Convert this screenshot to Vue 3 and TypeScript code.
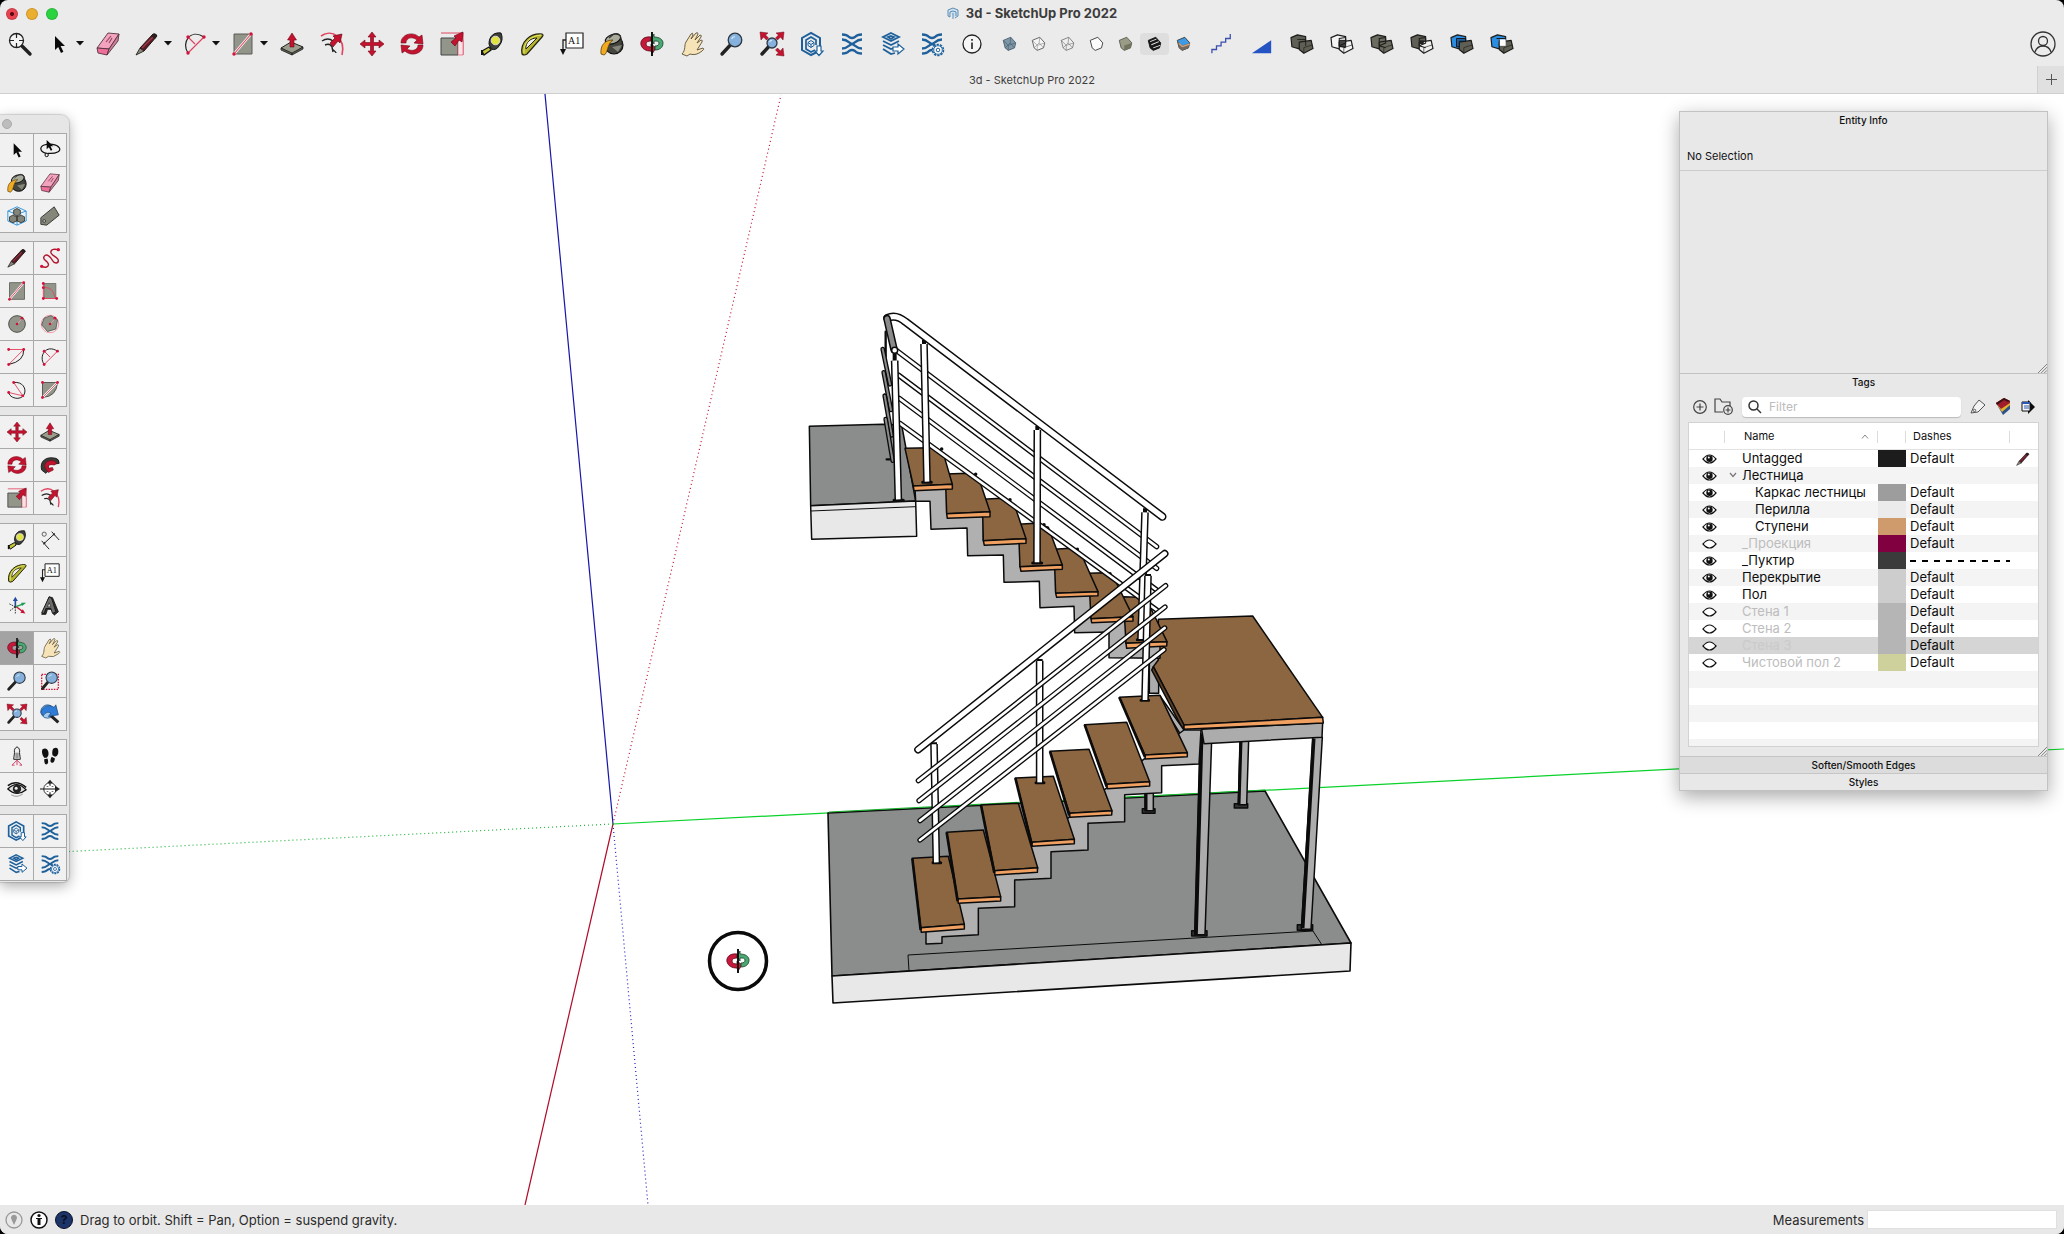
<script setup lang="ts">
import { ref } from 'vue'

interface Tool { icon: string; label: string; menu?: boolean }
interface Tag {
  name: string
  color?: string
  indent?: boolean
  folder?: boolean
  hidden?: boolean
  dashed?: boolean
  current?: boolean
  selected?: boolean
}

const dot = (x: number, y: number, r = 1.7) => `<circle cx="${x}" cy="${y}" r="${r}" fill="#d3123a"/>`
const lens = (x: number, y: number, r: number, hx: number, hy: number) =>
  `<path d="M${x} ${y}L${hx} ${hy}" stroke="#222" stroke-width="3.4" stroke-linecap="round"/><circle cx="${x}" cy="${y}" r="${r}" fill="#86b1dc" stroke="#2d3743" stroke-width="1.3"/><path d="M${x - r / 2} ${y - 1}a${r / 2} ${r / 2} 0 0 1 ${r / 2}-${r / 3}" fill="none" stroke="#d4e7f8" stroke-width="1.2"/>`
const waves = '<g fill="none" stroke="#1d609b" stroke-width="2.3"><path d="M2 2.500q5 0 7 2.500 3 2 6 0 2-2.500 7-2.500"/><path d="M2 7.500c6 0 8 4.500 10 4.500s4-4.500 10-4.500"/><path d="M2 16.500c6 0 8-4.500 10-4.500s4 4.500 10 4.500"/><path d="M2 21.500q5 0 7-2.500 3-2 6 0 2 2.500 7 2.500"/></g>'
const cube = (fill: string, stroke: string, extra = '') =>
  `<path d="M2 7 14 2l8 9-2 8-10 4-5-4z" fill="${fill}" stroke="${stroke}" stroke-width="1.400" stroke-linejoin="round"/>${extra}`
const cubeEdges = (c: string) => `<path d="M2 7l8 8 12-4M10 15v8M14 2l-1 9-8 8M13 11l7 8" fill="none" stroke="${c}" stroke-width="1"/>`
const solidA = (f: string) => `<path d="M0 5 7 2l9 2v10l-8 3-7-2z" fill="${f}" stroke="#1d1d1b" stroke-width="1.300" stroke-linejoin="round"/>`
const solidB = (f: string) => `<path d="M9 10 22 8l2 9-10 5-5-4z" fill="${f}" stroke="#1d1d1b" stroke-width="1.300" stroke-linejoin="round"/><path d="M14 16l9-3M14 16v6" stroke="#1d1d1b" stroke-width=".7"/>`
const solidLines = '<path d="M9 10V6l7-1M9 6v8l7 2M9 14l7-3v-5" fill="none" stroke="#1d1d1b" stroke-width="1.100"/>'

const icons: Record<string, string> = {
  target: '<path d="M14 14l8 8" stroke="#222" stroke-width="3.400" stroke-linecap="round"/><circle cx="8.500" cy="8.500" r="7" fill="#f4f4f4" stroke="#222" stroke-width="1.300"/><path d="M8.500 1v5M8.500 11v5M1 8.500h5M11 8.500h5" stroke="#222" stroke-width="1.200"/>',
  select: '<path d="M8 4v14l3.200-3 2.800 6 2.400-1.200-2.800-5.800H18z" fill="#0a0a0a"/>',
  lasso: '<path d="M8 16C1 15-2 9 5 6c6-2 15-1 18 3s-3 8-14 7" fill="none" stroke="#111" stroke-width="1.500"/><circle cx="8" cy="18" r="2" fill="none" stroke="#111" stroke-width="1.200"/><path d="M8 0v11l2.600-2.400L13 13l1.800-1-2.200-4.600H16z" fill="#0a0a0a"/>',
  eraser: '<path d="M1 16 12 1l11 1-10 15z" fill="#f4a3be" stroke="#54333e" stroke-width=".9"/><path d="M1 16l12 1-2 6-9-2z" fill="#ee6f9b" stroke="#54333e" stroke-width=".9"/><path d="M13 17 23 2l-1 7-11 14z" fill="#cf7f9b" stroke="#54333e" stroke-width=".9"/><path d="M10 10l5-6M13 11l3-5" stroke="#8d4560" stroke-width="1.100"/>',
  pencil: '<path d="M5 16 18 2q3-1 4 2L9 19z" fill="#5b1a25" stroke="#1b1313" stroke-width="1"/><path d="M7 16 19 4" stroke="#a0394a" stroke-width="1.200"/><path d="M5 16l4 3-8 4z" fill="#8d8878" stroke="#111" stroke-width=".8"/><path d="M18 2q3-1 4 2l-2 3-4-3z" fill="#2a2022"/>',
  freehand: '<path d="M2 22c4 2 9 1 8-3s-8-5-5-9 8 1 10 5 7 4 7 0-9-6-9-10 5-4 9-3" fill="none" stroke="#b3152d" stroke-width="1.700"/>' + dot(2, 22, 2) + dot(22, 2, 2),
  arc: '<path d="M5 21C-2 11 7-4 21 5" fill="none" stroke="#222" stroke-width="1.200"/><path d="M5 5l7 7M5 21 21 5" stroke="#e0445f" stroke-width="1.200"/>' + dot(5, 5) + dot(21, 5) + dot(5, 21),
  pieArc: '<path d="M2 3h18M2 21 20 3" stroke="#e0445f" stroke-width="1.100"/><path d="M20 3q1 14-18 18" fill="none" stroke="#222" stroke-width="1.200"/>' + dot(2, 3) + dot(20, 3) + dot(2, 21),
  arc3: '<path d="M8 3c16-2 18 18 5 19C6 22 2 18 2 14" fill="none" stroke="#222" stroke-width="1.200"/><path d="M8 3l11 16L2 15" fill="none" stroke="#e0445f" stroke-width="1.100"/>' + dot(8, 3) + dot(19, 19) + dot(2, 15),
  pie: '<path d="M3 3h18q-1 17-18 18z" fill="#94968a" stroke="#444"/><path d="M3 21 21 3" stroke="#fff" stroke-width="2.400"/><path d="M3 21 21 3" stroke="#e0445f" stroke-width="1"/>' + dot(3, 3) + dot(21, 3) + dot(3, 21),
  rect: '<path d="M3 2h18v20H3z" fill="#92958a" stroke="#5a5c55"/><path d="M3 22 20 2" stroke="#fff" stroke-width="2.600"/><path d="M3 22 20 2" stroke="#e0445f" stroke-width="1.100"/>' + dot(3, 22) + dot(20, 2),
  rotRect: '<path d="M5 3h14v18H5z" fill="#92958a" stroke="#6a6c65"/><path d="M4 3v18h16M4 8c9-1 12 4 14 12" fill="none" stroke="#e0445f" stroke-width="1.100"/>' + dot(4, 3) + dot(4, 8) + dot(4, 21) + dot(20, 21),
  circle: '<circle cx="12" cy="12" r="10" fill="#92958a" stroke="#4e504a" stroke-width="1.200"/><path d="M12 12l6-6" stroke="#f3a0b0"/>' + dot(12, 12, 1.5) + dot(18, 5),
  polygon: '<circle cx="12" cy="12" r="10.500" fill="none" stroke="#f08a9b"/><path d="M5 5l8-3 8 5-2 11-10 3-7-8z" fill="#92958a" stroke="#4e504a"/><path d="M12 12l6-6" stroke="#f3a0b0"/>' + dot(12, 12, 1.5) + dot(18, 5),
  push: '<path d="M1 16 11 10l12 5-11 7z" fill="#9a9c8c" stroke="#22221f" stroke-width="1"/><path d="M1 16v2l11 5v-2zM23 15v2l-11 6v-2z" fill="#5d5f55" stroke="#22221f" stroke-width=".8"/><path d="M10 15V8H7.500L12 1l4.500 7H14v7z" fill="#c4122f" stroke="#6d0a18" stroke-width=".6"/>',
  offset: '<path d="M1 4C12-4 26 6 22 23" fill="none" stroke="#e0445f" stroke-width="1.600"/><path d="M2 9q6-4 11 0M12 17q4 3 4 4M5 13q5-2 7 2l1 5" fill="none" stroke="#222" stroke-width="1.400"/><path d="M10 11 15 6 13 4 22 2 20 11 18 9 13 15z" fill="#c4122f" stroke="#6d0a18" stroke-width=".7"/>',
  move: '<path d="M12 0l4 5h-2.500v5.500H19V8l5 4-5 4v-2.500h-5.500V19H16l-4 5-4-5h2.500v-5.500H5V16l-5-4 5-4v2.500h5.500V5H8z" fill="#c4122f" stroke="#6d0a18" stroke-width=".6"/>',
  rotate: '<path d="M1 11C1 2 13-1 19 5l3-2 1 9-9-1 3-3C12 4 6 6 6 11zM23 13c0 9-12 12-18 6l-3 2-1-8 9 1-3 3c5 3 11 1 11-4z" fill="#c4122f" stroke="#6d0a18" stroke-width=".6"/>',
  follow: '<path d="M2 18C-1 7 8 1 19 4q4 1 4 6l-6 1c-8-2-8 3-6 7l-4 4z" fill="#3c3c38" stroke="#111"/><path d="M6 15c-1-7 4-9 11-8l3 3-3 2c-5-1-8 0-7 4l5-1 1 3-6 3z" fill="#c4122f" stroke="#6d0a18" stroke-width=".7"/>',
  scale: '<path d="M1 1h22v22" fill="none" stroke="#e0445f"/><path d="M1 6h17v17H1z" fill="#92958a" stroke="#444"/><path d="M18 8h5v15h-5z" fill="#f6e3e5" stroke="#e0445f" stroke-width=".6"/><path d="M11 10l5-4-2-2 9-4-1 10-3-2-4 6z" fill="#c4122f" stroke="#6d0a18" stroke-width=".7"/>',
  tape: '<path d="M2 19l7-4 2 3-7 5z" fill="#c6c53a" stroke="#111" stroke-width="1.200"/><path d="M9 12C9 4 14 0 21 1q3 7-2 13-3 5-8 3z" fill="#3e3f3b" stroke="#111"/><circle cx="15.500" cy="8.500" r="4.300" fill="#e2e23d" stroke="#ddd" stroke-width="1"/><path d="M2 18v5" stroke="#111" stroke-width="2"/>',
  dims: '<path d="M2 13l9 10M14 2l9 10M4 17 18 4" stroke="#222" stroke-width="1.200" fill="none"/><circle cx="5" cy="5" r="2.500" fill="none" stroke="#444"/><path d="M4 17l3-1-2-2zM18 5l-3 0 2 2z" fill="#222"/>',
  protractor: '<path d="M2 22C0 10 10 1 22 2q2 1 0 3L7 22q-3 2-5 0z" fill="#b5b52f" stroke="#23230f" stroke-width="1.200"/><path d="M6 17C5 10 11 6 17 6z" fill="#eee" stroke="#23230f"/><path d="M4 21C3 11 10 4 21 3" stroke="#e9e86c" fill="none"/>',
  text: '<path d="M6 1h17v15H6z" fill="#fff" stroke="#222" stroke-width="1.200"/><path d="M6 8H3v10" stroke="#222" stroke-width="1.300" fill="none"/><path d="M0 17h6l-3 6z" fill="#111"/><text x="8" y="12" font-family="Liberation Serif, serif" font-size="10" fill="#111">A1</text>',
  axes: '<path d="M10 14V5" stroke="#234ba0" stroke-width="2"/><path d="M7 6l3-5 3 5z" fill="#234ba0"/><path d="M10 12l8 6" stroke="#c4122f" stroke-width="1.800"/><path d="M22 21l-6-1 3-4z" fill="#c4122f"/><path d="M10 13l8-3" stroke="#1b9a51" stroke-width="1.600"/><path d="M23 8l-5 4-1-4z" fill="#1b9a51"/><path d="M10 13v9M10 13 3 18M10 13 2 9" stroke="#222" fill="none" stroke-dasharray="2 1"/>',
  text3d: '<path d="M11 1l4 1 7 17-5 4-3-7H9l-2 6H2z" fill="#2f2f2d" stroke="#111"/><path d="M11 1 14 3 19 19 15 21 13 15H7L5 21 2 20z" fill="#6c6c68" stroke="#111"/><path d="M11 8l2 5H9z" fill="#e6e6e6" stroke="#111" stroke-width=".7"/>',
  paint: '<ellipse cx="14" cy="13" rx="9" ry="9" fill="#45463f" stroke="#111" stroke-width="1.200"/><ellipse cx="13" cy="7" rx="8" ry="4.500" fill="#a9ab9a" stroke="#111" stroke-width="1.200" transform="rotate(-20 13 7)"/><path d="M9 6c9-9 14-3 12 9" fill="none" stroke="#333" stroke-width="1.200"/><path d="M12 15l6 5 4-7z" fill="#85877a"/><path d="M1 22C0 13 5 8 13 8c-6 3-5 14-9 15z" fill="#f0ab22" stroke="#5d4210" stroke-width=".8"/>',
  orbit: '<path d="M11 5C3 4 0 9 1 13c2 6 8 6 10 6l1 3 4-6-5-4v3c-3 0-5-1-5-3s2-3 5-3z" fill="#c4193a" stroke="#5d0a1c" stroke-width=".8"/><path d="M14 5c6 0 9 3 9 6 0 5-4 7-8 7v-4c3 0 4-1 4-3s-2-2-5-2v3l-3-5 3-5z" fill="#4aa873" stroke="#173d28" stroke-width=".8"/><path d="M12 0v24" stroke="#0a0a0a" stroke-width="1.900"/>',
  hand: '<path d="M2 22c4-4 2-9 4-12l5-8q2-2 2 1l-2 4 5-6q2-1 2 1l-3 6 5-5q2 0 1 2l-4 6 4-3q2 0 1 2l-5 8 6-2q2 1-1 3-6 5-12 3l-3 2z" fill="#f6e3b8" stroke="#5c5036" stroke-width=".9"/>',
  zoom: lens(15, 8, 6.8, 2, 22),
  zoomWin: '<path d="M2 4h20v18H2z" fill="none" stroke="#d3123a" stroke-width="1.600" stroke-dasharray="1.800 1.400"/>' + lens(14, 8, 6.8, 3, 21),
  zoomExt: '<g fill="#c4122f" stroke="#6d0a18" stroke-width=".5"><path d="M0 0l8 1-2.500 2 3 3-2 2-3-3L1 8zM24 0l-8 1 2.500 2-3 3 2 2 3-3L23 8zM24 24l-8-1 2.500-2-3-3 2-2 3 3L23 16z"/></g>' + lens(12, 11, 5, 2, 22),
  previous: '<circle cx="9" cy="9" r="8" fill="#a6cdf0" stroke="#2a5b8c"/><path d="M13 14l9 8" stroke="#222" stroke-width="3.600"/><path d="M1 10c2-8 10-10 16-6l2-3 3 12-12 2 3-4c-4-2-6-1-9 3z" fill="#2f7cd6" stroke="#173f70" stroke-width=".8"/>',
  camera: '<path d="M12 1q4 2 3 7l1 8H8l1-8q-1-5 3-7z" fill="#eee" stroke="#222" stroke-width="1.200"/><path d="M10 8h4v7h-4z" fill="#999"/><path d="M12 17l-6 6m6-6 6 6m-6-6v6M6 23h3M15 23h3" stroke="#d3456a" stroke-width="1.200"/>',
  walk: '<g fill="#111"><path d="M3 4q5-3 7 3 1 6-2 7H5Q1 9 3 4zM5 16l4-1q2 6-1 7t-3-6zM16 3q6-3 6 4 0 5-4 6l-3-2q-1-5 1-8zM14 13l4 2q-1 6-4 5t0-7z"/></g>',
  look: '<path d="M1 12Q12 1 23 13 12 22 1 12z" fill="#ddd" stroke="#111" stroke-width="1.500"/><path d="M1 8q10-8 22 2" fill="none" stroke="#111" stroke-width="1.800"/><circle cx="12" cy="12" r="5" fill="#222"/><circle cx="11" cy="11" r="1.800" fill="#eee"/><path d="M5 19q7 4 14-1" stroke="#888" fill="none"/>',
  section: '<circle cx="12" cy="12" r="7.500" fill="#fff" stroke="#333" stroke-width="1.200"/><path d="M0 12h20M12 4v4m0 8v4" stroke="#111" stroke-width="1.300"/><path d="M8.500 5 12 1l3.500 4zM8.500 19l3.500 4 3.500-4zM18 8l6 4-6 4z" fill="#222"/><path d="M8 9h2M14 9h2M8 15h2M14 15h2" stroke="#555"/>',
  warehouse: '<path d="M19 19l-8 4-9-5V6l9-5 9 5v8" fill="none" stroke="#1d609b" stroke-width="2"/><path d="M15 18l-4 2-5-3V8l5-3 5 3v5" fill="none" stroke="#1d609b" stroke-width="1.700"/><path d="M11 8.500l3 2v3l-3 2-3-2v-3zM8 10.500l3 2 3-2M11 12.500v3" fill="none" stroke="#1d609b" stroke-width="1"/><path d="M17 14h4v5h2l-4 4.500-4-4.500h2z" fill="#fff" stroke="#1d609b" stroke-width="1.200"/>',
  extension: waves,
  layout: '<g fill="none" stroke="#1d609b" stroke-width="1.800"><path d="M11 1l8 4-8 4-8-4z"/><path d="M11 4l3 1-3 2-3-2z"/><path d="M3 9l8 4 8-4M3 13l8 4 3-1M3 17l8 5 4-1"/></g><path d="M13 15h5v-3l6 5-6 5v-3h-5z" fill="#fff" stroke="#1d609b" stroke-width="1.200"/>',
  extGear: waves + '<circle cx="18" cy="18" r="5.500" fill="#fff" stroke="#1d609b" stroke-width="1.600" stroke-dasharray="2.400 1"/><circle cx="18" cy="18" r="4.300" fill="#fff" stroke="#1d609b"/><circle cx="18" cy="18" r="1.800" fill="none" stroke="#1d609b"/>',
  info: '<circle cx="12" cy="12" r="9" fill="#f6f6f6" stroke="#222" stroke-width="1.300"/><path d="M12 10.500V17M12 7v1.800" stroke="#222" stroke-width="1.600"/>',
  xray: cube('#7e97a8', '#4a5d6b', cubeEdges('#4a5d6b')),
  backEdges: cube('#f5f5f5', '#555', cubeEdges('#888')),
  wire: cube('#eee', '#777', cubeEdges('#777')),
  hiddenLine: cube('#fbfbfb', '#333'),
  shaded: cube('#9b9c88', '#55564a', '<path d="M10 15l12-4-2 8-10 4z" fill="#73745f"/>'),
  textured: cube('#191919', '#111', '<path d="M5 9l10-4M7 14l12-5M10 19l11-4" stroke="#e6e6e6" stroke-width="1.700"/>'),
  mono: cube('#3c9ae6', '#333', '<path d="M2 7l8 8 12-4-2 8-10 4-5-4z" fill="#75695c"/><path d="M5 12l5 5 12-4" stroke="#d7a67b" stroke-width="2" fill="none"/>'),
  stairs: '<path d="M1 22v-4h5v-4h5v-4h5V6h5V1" fill="none" stroke="#3a4fae" stroke-width="1.400"/>',
  ramp: '<path d="M1 22 22 8v14z" fill="#2453c4"/>',
  outer: solidA('#5f5f55') + solidB('#5f5f55') + '<path d="M7 7h9v7" fill="none" stroke="#1d1d1b"/>',
  intersect: solidA('#f4f4f4') + solidB('#f4f4f4') + '<path d="M9 8h7v7H9z" fill="#444" stroke="#111"/>' + solidLines,
  union: solidA('#6b6b60') + solidB('#6b6b60') + solidLines,
  subtract: solidA('#5f5f55') + solidB('#f0f0f0') + solidLines + '<path d="M9 8h5v4H9z" fill="#222"/>',
  trim: solidA('#2b8de2') + solidB('#5f5f55') + '<path d="M6 6h10v3H9v6H6z" fill="#1c5f9e" stroke="#111"/>',
  split: solidA('#2b8de2') + solidB('#5f5f55') + '<path d="M9 7h7v7H9z" fill="#fff"/><path d="M6 6h10M9 7v8" stroke="#111" fill="none"/>',
  component: '<path d="M1 6l11-5 11 5v12l-11 5-11-5zM1 6l11 4 11-4M12 10v13" fill="#e9f4fc" stroke="#3e9ad8" stroke-width="1.200"/><g fill="#83857a" stroke="#23231f" stroke-width=".9"><path d="M8 5l4-2 4 2v5l-4 2-4-2zM3 13l4-2 5 2v5l-5 2-4-2zM12 13l5-2 4 2v5l-4 2-5-2z"/></g>',
  tag: '<path d="M1 14 17 1l6 10L8 23l-7-1z" fill="#84867a" stroke="#33342d" stroke-width="1.100"/><circle cx="5" cy="18" r="1.600" fill="#eee" stroke="#222"/>',
}

const mainTools: Tool[] = [
  { icon: 'target', label: 'Zoom Selection' },
  { icon: 'select', label: 'Select', menu: true },
  { icon: 'eraser', label: 'Eraser' },
  { icon: 'pencil', label: 'Line', menu: true },
  { icon: 'arc', label: 'Arc', menu: true },
  { icon: 'rect', label: 'Rectangle', menu: true },
  { icon: 'push', label: 'Push/Pull' },
  { icon: 'offset', label: 'Offset' },
  { icon: 'move', label: 'Move' },
  { icon: 'rotate', label: 'Rotate' },
  { icon: 'scale', label: 'Scale' },
  { icon: 'tape', label: 'Tape Measure' },
  { icon: 'protractor', label: 'Protractor' },
  { icon: 'text', label: 'Text' },
  { icon: 'paint', label: 'Paint Bucket' },
  { icon: 'orbit', label: 'Orbit' },
  { icon: 'hand', label: 'Pan' },
  { icon: 'zoom', label: 'Zoom' },
  { icon: 'zoomExt', label: 'Zoom Extents' },
  { icon: 'warehouse', label: '3D Warehouse' },
  { icon: 'extension', label: 'Extension Warehouse' },
  { icon: 'layout', label: 'Send to LayOut' },
  { icon: 'extGear', label: 'Extension Manager' },
  { icon: 'info', label: 'Model Info' },
]
const styleTools: Tool[] = [
  { icon: 'xray', label: 'X-Ray' },
  { icon: 'backEdges', label: 'Back Edges' },
  { icon: 'wire', label: 'Wireframe' },
  { icon: 'hiddenLine', label: 'Hidden Line' },
  { icon: 'shaded', label: 'Shaded' },
  { icon: 'textured', label: 'Shaded With Textures' },
  { icon: 'mono', label: 'Monochrome' },
]
const solidTools: Tool[] = [
  { icon: 'stairs', label: 'From Contours' },
  { icon: 'ramp', label: 'From Scratch' },
  { icon: 'outer', label: 'Outer Shell' },
  { icon: 'intersect', label: 'Intersect' },
  { icon: 'union', label: 'Union' },
  { icon: 'subtract', label: 'Subtract' },
  { icon: 'trim', label: 'Trim' },
  { icon: 'split', label: 'Split' },
]
const palette: string[][] = [
  ['select', 'lasso', 'paint', 'eraser', 'component', 'tag'],
  ['pencil', 'freehand', 'rect', 'rotRect', 'circle', 'polygon', 'pieArc', 'arc', 'arc3', 'pie'],
  ['move', 'push', 'rotate', 'follow', 'scale', 'offset'],
  ['tape', 'dims', 'protractor', 'text', 'axes', 'text3d'],
  ['orbit', 'hand', 'zoom', 'zoomWin', 'zoomExt', 'previous'],
  ['camera', 'walk', 'look', 'section'],
  ['warehouse', 'extension', 'layout', 'extGear'],
]

const tags: Tag[] = [
  { name: 'Untagged', color: '#1c1c1c', current: true },
  { name: 'Лестница', folder: true },
  { name: 'Каркас лестницы', color: '#9d9d9d', indent: true },
  { name: 'Перилла', color: '#ebebeb', indent: true },
  { name: 'Ступени', color: '#cf9b6c', indent: true },
  { name: '_Проекция', color: '#800040', hidden: true },
  { name: '_Пуктир', color: '#3b3b3b', dashed: true },
  { name: 'Перекрытие', color: '#cdcdcd' },
  { name: 'Пол', color: '#cdcdcd' },
  { name: 'Стена 1', color: '#b5b5b5', hidden: true },
  { name: 'Стена 2', color: '#b5b5b5', hidden: true },
  { name: 'Стена 3', color: '#b5b5b5', hidden: true, selected: true },
  { name: 'Чистовой пол 2', color: '#cfd19c', hidden: true },
]

const filter = ref('')
const measurements = ref('')

/* Treads: top face, front edge and, for the lower flight, the shaded left side. */
const lowerTreads = [
  ['97,1075 205,1069 253,1273 122,1283', '122,1283 253,1273 253,1287 124,1297', '97,1075 122,1290'],
  ['200,997 310,990 362,1190 233,1197', '233,1197 362,1190 362,1203 235,1210', '200,997 233,1204'],
  ['303,915 415,910 473,1103 343,1112', '343,1112 473,1103 472,1117 345,1125', '303,915 343,1118'],
  ['406,834 520,829 583,1018 455,1027', '455,1027 583,1018 583,1031 457,1039', '406,834 455,1033'],
  ['510,754 627,748 696,932 568,940', '568,940 696,932 695,945 570,952', '510,754 568,946'],
  ['614,674 740,667 809,845 680,853', '680,853 809,845 809,858 682,866', '614,674 680,860'],
  ['718,592 840,586 922,758 795,765', '795,765 922,758 922,770 796,777', '718,592 795,771'],
]
const upperTreads = [
  ['1000,920 1045,922 1085,960 1131,1055 1008,1060', '1008,1060 1131,1055 1130,1068 1010,1075'],
  ['896,850 945,848 975,870 1029,980 903,986', '903,986 1029,980 1029,993 905,998'],
  ['792,778 840,775 875,795 924,905 797,910', '797,910 924,905 924,917 800,922'],
  ['685,703 735,700 775,712 817,825 690,830', '690,830 817,825 817,838 693,844'],
  ['577,628 635,625 675,650 708,746 580,752', '580,752 708,746 708,760 583,766'],
  ['466,552 535,550 567,567 600,665 470,671', '470,671 600,665 600,680 472,685'],
  ['345,475 425,473 462,497 487,583 370,588', '370,588 487,583 487,597 372,602'],
]
const upperRails = ['M320 182 1100 770', 'M325 255 1100 835', 'M328 325 1100 900', 'M330 400 1100 960']
const lowerRails = ['M115 842 857 257', 'M117 902 855 321', 'M120 962 854 384', 'M120 1020 852 449']
const upperPosts = ['M314 212 325 628', 'M402 162 411 575', 'M742 420 741 817', 'M1065 667 1053 1047']
const lowerPosts = ['M162 732 169 1087', 'M479 482 479 847', 'M804 227 795 600']
const knobs = [[455, 477], [557, 553], [660, 629], [762, 704], [862, 778], [960, 851]]
</script>

<template>
  <div class="window">
    <header class="top">
      <div class="titlebar">
        <div class="lights">
          <button class="light close" aria-label="Close"></button>
          <button class="light minimise" aria-label="Minimise"></button>
          <button class="light full" aria-label="Full screen"></button>
        </div>
        <h1>
          <svg width="12" height="13" viewBox="0 0 12 13" aria-hidden="true">
            <path d="M1 3 6 1l5 2v6l-3 2M1 3v6l2 1V5l3-1 3 1v4M6 6v6" fill="#cfe0ee" stroke="#5d8db5" />
          </svg>
          3d - SketchUp Pro 2022
        </h1>
      </div>
      <nav class="toolbar" aria-label="Tools">
        <div v-for="t in mainTools" :key="t.icon" :class="t.menu ? 'tool with-menu' : 'tool'">
          <button :aria-label="t.label"><svg class="ico" viewBox="0 0 24 24" v-html="icons[t.icon]"></svg></button>
          <button v-if="t.menu" class="caret" :aria-label="t.label + ' menu'">
            <svg width="8" height="5" viewBox="0 0 8 5"><path d="M0 0h8L4 4.500z" fill="#111" /></svg>
          </button>
        </div>
        <div class="styles">
          <button v-for="t in styleTools" :key="t.icon" :aria-label="t.label" :class="{ on: t.icon === 'textured' }">
            <svg class="small" viewBox="0 0 24 24" v-html="icons[t.icon]"></svg>
          </button>
        </div>
        <div v-for="t in solidTools" :key="t.icon" class="tool narrow">
          <button :aria-label="t.label"><svg class="ico" viewBox="0 0 24 24" v-html="icons[t.icon]"></svg></button>
        </div>
        <button class="account" aria-label="Account">
          <svg width="26" height="26" viewBox="0 0 26 26" fill="none" stroke="#333" stroke-width="1.300">
            <circle cx="13" cy="13" r="12" /><circle cx="13" cy="10" r="4.500" /><path d="M5 21q2-6 8-6t8 6" />
          </svg>
        </button>
      </nav>
      <div class="tabs">
        <span class="tab">3d - SketchUp Pro 2022</span>
        <button class="add" aria-label="New tab">
          <svg width="11" height="11" viewBox="0 0 11 11"><path d="M5.500 0v11M0 5.500h11" stroke="#555" /></svg>
        </button>
      </div>
    </header>

    <main class="stage">
      <svg class="model" viewBox="0 94 2064 1111" preserveAspectRatio="xMidYMid slice" role="img" aria-label="Staircase model">
        <g fill="none">
          <path d="M545 94 613 824" stroke="#1616a8" stroke-width="1.200" />
          <path d="M613 824 648 1205" stroke="#2424b8" stroke-width="1.200" stroke-dasharray="1 3" />
          <path d="M613 824 525 1205" stroke="#b00a28" stroke-width="1.200" />
          <path d="M613 824 781 95" stroke="#c01030" stroke-width="1.200" stroke-dasharray="1 3" />
          <path d="M613 824 2064 749" stroke="#0ad22a" stroke-width="1.200" />
          <path d="M613 824 0 855" stroke="#1eb23a" stroke-width="1.200" stroke-dasharray="1 3" />
        </g>

        <g stroke="#0b0b0b" stroke-width="1.600" stroke-linejoin="round">
          <path d="M828 813 1265 791 1351 943 832 976z" fill="#8a8d8b" />
          <path d="M832 976 1351 943 1350 971 833 1003z" fill="#e8e8e8" />
          <path d="M909 971 908 955 1313 931 1322 945" fill="none" stroke-width="1" />
        </g>
        <path d="M829 812 1265 790" stroke="#1cb031" stroke-width="1.200" />

        <g transform="translate(880 500) scale(.33333)" stroke="#0b0b0b" stroke-width="4.500" stroke-linejoin="round">
          <path d="M1063 911h40v13h-40zM787 926h38v14h-38z" fill="#333" />
          <path d="M1080 720h26l-6 194h-25zM795 870h25v62h-25z" fill="#acacac" />
          <path d="M1083 722 1077 912M798 880v50" stroke-width="9" />
          <path d="M935 1292h46v16h-46zM1252 1274h46v17h-46z" fill="#333" />
          <path d="M960 720h35l-20 584h-31z" fill="#acacac" />
          <path d="M1299 712h28l-34 576h-29z" fill="#acacac" />
          <path d="M965 700 948 1302M1301 716 1268 1284" stroke-width="11" />
          <path d="M965 688 1328 668 1326 712 972 731z" fill="#acacac" />
          <path d="M808 470h28v110h-28z" fill="#acacac" />
          <path d="M835 358 1118 348 1328 652 912 675 820 500 835 480z" fill="#8c6541" />
          <path d="M820 500 912 675V695L815 510z" fill="#5b4027" />
          <path d="M912 675 1328 652 1330 669 912 688z" fill="#f0a061" />
        </g>

        <g transform="translate(790 290) scale(.33333)" stroke="#0b0b0b" stroke-width="4.500" stroke-linejoin="round">
          <path d="M58 409 278 403 335 405 377 633 62 647z" fill="#8a8d8b" />
          <path d="M62 647 377 633 380 739 65 748z" fill="#e8e8e8" />
          <path d="M63 663 378 650" stroke-width="3" />
          <path d="M375 595H470V670H580V750H690V828H797V905H903V982H1008V1060H1110V1105L957 1103V1026L854 1028 852 949 750 953 748 874 642 877 640 795 533 797 531 714 423 718 420 634 377 634z" fill="#b0b0b0" />
          <g v-for="t in upperTreads" :key="t[0]">
            <polygon :points="t[0]" fill="#8c6541" />
            <polygon :points="t[1]" fill="#f0a061" />
          </g>
          <circle v-for="k in knobs" :key="k[0]" :cx="k[0]" :cy="k[1]" r="3" fill="#222" />
          <g fill="none" stroke-linecap="round">
            <path d="M287 125V200M290 508H300" stroke-width="7" />
            <g v-for="d in ['M278 177 300 283', 'M281 247 303 360', 'M284 317 305 436', 'M287 387 308 512']" :key="d">
              <path :d="d" stroke-width="14" /><path :d="d" stroke="#8b8b8b" stroke-width="6" />
            </g>
            <g v-for="d in upperRails" :key="d">
              <path :d="d" stroke-width="16" /><path :d="d" stroke="#fff" stroke-width="8" />
            </g>
            <path d="M314 190V212M402 150v14M742 408v14M1065 655v14" stroke-width="12" stroke-linecap="butt" />
            <path d="M312 631H340M398 577H424M728 819H755M1042 1049H1066" stroke-width="9" />
            <g v-for="d in upperPosts" :key="d" stroke-linecap="butt">
              <path :d="d" stroke-width="23" /><path :d="d" stroke="#fff" stroke-width="14" />
            </g>
            <path d="M1117 680 346 95Q318 72 292 84" stroke-width="25" />
            <path d="M1117 680 346 95Q318 72 292 84" stroke="#fff" stroke-width="16" />
            <path d="M291 86 312 178" stroke-width="23" />
            <path d="M291 86 312 178" stroke="#8b8b8b" stroke-width="14" />
            <circle cx="314" cy="181" r="9" fill="#fff" />
          </g>
        </g>

        <g transform="translate(880 500) scale(.33333)" stroke="#0b0b0b" stroke-width="4.500" stroke-linejoin="round">
          <path d="M840 588 912 690V720L850 620z" fill="#b0b0b0" />
          <path d="M138 1290V1332L186 1330V1310L295 1304V1225L404 1220V1140L513 1135V1055L624 1050V970L734 965V884L845 878V797L957 792 963 690 912 690 795 775 685 860 570 950 455 1035 345 1120 235 1205z" fill="#b0b0b0" />
          <g v-for="t in lowerTreads" :key="t[0]">
            <polygon :points="t[0]" fill="#8c6541" />
            <polygon :points="t[1]" fill="#f0a061" />
            <polyline :points="t[2]" fill="none" stroke-width="8" />
          </g>
          <g fill="none" stroke-linecap="round">
            <path d="M159 1088H182M468 848H492M783 601H806" stroke-width="9" />
            <g v-for="d in lowerPosts" :key="d" stroke-linecap="butt">
              <path :d="d" stroke-width="23" /><path :d="d" stroke="#fff" stroke-width="14" />
            </g>
            <path d="M153 730H171M470 480H488M795 225H813" stroke-width="6" stroke-linecap="butt" />
            <g v-for="d in lowerRails" :key="d">
              <path :d="d" stroke-width="16" /><path :d="d" stroke="#fff" stroke-width="8" />
            </g>
            <path d="M114 749 854 161" stroke-width="23" />
            <path d="M114 749 854 161" stroke="#fff" stroke-width="14" />
          </g>
        </g>

        <circle cx="738" cy="961" r="28.500" fill="#fff" stroke="#0a0a0a" stroke-width="3.500" />
        <g transform="translate(726 949)" v-html="icons.orbit"></g>
      </svg>

      <aside class="palette" aria-label="Large tool set">
        <div class="grip"><button aria-label="Close tool set"></button></div>
        <div v-for="(group, i) in palette" :key="i" class="group">
          <button v-for="name in group" :key="name" :aria-label="name" :class="{ active: name === 'orbit' }">
            <svg viewBox="0 0 24 24" v-html="icons[name]"></svg>
          </button>
        </div>
      </aside>

      <aside class="tray" aria-label="Tray">
        <section class="entity">
          <h2>Entity Info</h2>
          <p>No Selection</p>
          <div class="blank"><svg class="resize" viewBox="0 0 10 10"><path d="M0 10 10 0M3.500 10 10 3.500M7 10l3-3" stroke="#777" /></svg></div>
        </section>
        <section class="tags">
          <h2>Tags</h2>
          <div class="tag-tools">
            <button aria-label="Add tag">
              <svg width="14" height="14" viewBox="0 0 14 14" fill="none" stroke="#444" stroke-width="1.200"><circle cx="7" cy="7" r="6.300" /><path d="M7 3.500v7M3.500 7h7" /></svg>
            </button>
            <button aria-label="Add tag folder">
              <svg width="19" height="17" viewBox="0 0 19 17" fill="none" stroke="#444" stroke-width="1.200"><path d="M9 14H1V1h5l2 3h8v4" /><circle cx="14" cy="12" r="4.300" /><path d="M14 9.500v5M11.500 12h5" /></svg>
            </button>
            <label class="filter">
              <svg width="14" height="14" viewBox="0 0 14 14" fill="none" stroke="#333" stroke-width="1.500"><circle cx="5.500" cy="5.500" r="4.500" /><path d="M9 9l4 4" /></svg>
              <input v-model="filter" type="text" placeholder="Filter" aria-label="Filter tags" />
            </label>
            <button aria-label="Tag tool">
              <svg width="16" height="16" viewBox="0 0 16 16"><path d="M1 14 4 7 9 1l6 5-7 7z" fill="#f3f3f3" stroke="#555" /><circle cx="4.500" cy="11.500" r="1.200" fill="none" stroke="#555" /></svg>
            </button>
            <button aria-label="Color by tag">
              <svg width="17" height="17" viewBox="0 0 17 17"><path d="M1 5 9 0l6 3v8l-7 6z" fill="#2d5286" /><path d="M1 5 9 0l6 3v4l-8 7z" fill="#e5b32b" /><path d="M1 5 9 0l6 3v2l-9 6z" fill="#a01c2c" /><path d="M1 5 9 0l6 3-2 1-4-2-7 5z" fill="#3a1014" /></svg>
            </button>
            <button aria-label="Details">
              <svg width="14" height="14" viewBox="0 0 14 14"><path d="M7 0l7 7-7 7z" fill="#0c0c0c" /><path d="M1 2h8v9H1z" fill="#f4f4f4" stroke="#111" /><path d="M1 2h8v2H1z" fill="#2a5bb0" /><path d="M3 6h5M3 8h5" stroke="#2a5bb0" /></svg>
            </button>
          </div>
          <div class="list">
            <table>
              <colgroup><col class="c-eye" /><col /><col class="c-color" /><col class="c-dash" /><col class="c-edit" /></colgroup>
              <thead>
                <tr>
                  <th aria-label="Visible"></th>
                  <th class="h-name"><div>Name <svg width="8" height="5" viewBox="0 0 8 5"><path d="M1 4.500 4 1l3 3.500" fill="none" stroke="#888" /></svg></div></th>
                  <th aria-label="Color"></th>
                  <th class="h-dash">Dashes</th>
                  <th aria-label="Current"></th>
                </tr>
              </thead>
              <tbody>
                <tr v-for="t in tags" :key="t.name" :class="{ off: t.hidden, selected: t.selected }">
                  <td class="eye">
                    <button :aria-label="'Toggle ' + t.name">
                      <svg width="15" height="10" viewBox="0 0 15 10">
                        <path d="M1 5q6.500-8 13 0-6.500 8-13 0z" fill="#fff" stroke="#111" stroke-width="1.200" />
                        <g v-if="!t.hidden"><circle cx="7.500" cy="4.800" r="3.200" fill="#111" /><circle cx="6.800" cy="3.600" r="1" fill="#fff" /></g>
                      </svg>
                    </button>
                  </td>
                  <td :class="{ name: true, indent: t.indent, folder: t.folder }">
                    <svg v-if="t.folder" width="8" height="6" viewBox="0 0 8 6"><path d="M1 1l3 3.500L7 1" fill="none" stroke="#777" stroke-width="1.200" /></svg>
                    <span>{{ t.name }}</span>
                  </td>
                  <td :style="{ background: t.color }"></td>
                  <td class="dash">
                    <svg v-if="t.dashed" width="100" height="2" viewBox="0 0 100 2"><path d="M0 1h100" stroke="#000" stroke-width="2" stroke-dasharray="6 6" /></svg>
                    <template v-else-if="!t.folder">Default</template>
                  </td>
                  <td class="edit"><svg v-if="t.current" width="14" height="14" viewBox="0 0 24 24" v-html="icons.pencil"></svg></td>
                </tr>
              </tbody>
            </table>
          </div>
          <svg class="resize" viewBox="0 0 10 10"><path d="M0 10 10 0M3.500 10 10 3.500M7 10l3-3" stroke="#777" /></svg>
        </section>
        <h2 class="folded dark">Soften/Smooth Edges</h2>
        <h2 class="folded">Styles</h2>
      </aside>
    </main>

    <footer class="status">
      <button aria-label="Geolocation">
        <svg width="18" height="18" viewBox="0 0 18 18"><circle cx="9" cy="9" r="8" fill="none" stroke="#999" stroke-width="1.300" /><path d="M9 14 6.500 8.500a3 3 0 1 1 5 0z" fill="#999" /></svg>
      </button>
      <button aria-label="Credits">
        <svg width="18" height="18" viewBox="0 0 18 18"><circle cx="9" cy="9" r="8" fill="#fff" stroke="#111" stroke-width="1.500" /><circle cx="9" cy="4.500" r="1.600" fill="#111" /><path d="M6 7h6v1h-1.500v6h-3V8H6z" fill="#111" /></svg>
      </button>
      <button class="help" aria-label="Help">?</button>
      <span>Drag to orbit. Shift = Pan, Option = suspend gravity.</span>
      <label for="measure">Measurements</label>
      <input id="measure" v-model="measurements" type="text" />
    </footer>
  </div>
</template>

<style>
body { margin: 0; background: #000; }
</style>

<style scoped>
* { box-sizing: border-box; }
.window {
  display: flex;
  flex-direction: column;
  min-height: 100vh;
  overflow: hidden;
  border-radius: 8px;
  background: #ebebeb;
  color: #1a1a1a;
  font-family: Inter, "Liberation Sans", sans-serif;
  font-size: 13px;
}
button { display: flex; align-items: center; justify-content: center; padding: 0; border: 0; background: none; }
svg { display: block; flex: none; }
h1, h2, p { margin: 0; }
.top { border-bottom: 1px solid #cfcfcf; }
.titlebar { position: relative; display: flex; align-items: center; justify-content: center; height: 26px; }
.lights { position: absolute; left: 6px; top: 8px; display: flex; gap: 8px; }
.light { width: 12px; height: 12px; border-radius: 50%; border: 1px solid #0002; }
.close { background: radial-gradient(#5c0a12 24%, #e8434f 32%); }
.minimise { background: #ecae2f; }
.full { background: #2bd340; }
h1 { display: flex; align-items: center; gap: 7px; font-size: 13px; font-weight: 700; color: #3c3c3c; }
.toolbar { display: flex; align-items: center; height: 35px; }
.tool { display: flex; justify-content: center; width: 40px; }
.with-menu { justify-content: flex-start; gap: 5px; width: 48px; padding-left: 7px; }
.ico { width: 24px; height: 24px; overflow: visible; }
.narrow .ico { width: 22px; height: 22px; }
.small { width: 15px; height: 15px; overflow: visible; }
.styles { display: flex; margin: 0 4px 0 3px; }
.styles button { width: 29px; height: 22px; border-radius: 4px; }
.styles .on { background: #dedede; }
.account { margin: 0 8px 0 auto; }
.tabs { display: flex; align-items: center; height: 32px; padding-top: 5px; }
.tab { flex: 1; padding-left: 27px; text-align: center; font-size: 11px; color: #3e3e3e; }
.add { width: 27px; height: 27px; border-left: 1px solid #d0d0d0; background: #e0e0e0; }

.stage { position: relative; flex: 1; background: #fff; overflow: hidden; }
.model { position: absolute; inset: 0; width: 100%; height: 100%; }

.palette {
  position: absolute;
  left: 0;
  top: 21px;
  width: 69px;
  padding-bottom: 1px;
  border-radius: 0 8px 6px 0;
  background: #e6e6e6;
  box-shadow: 0 4px 14px #0005, 0 0 1px 1px #0002;
}
.grip { height: 19px; padding: 4px 2px; }
.grip button { width: 10px; height: 10px; border-radius: 50%; border: 1px solid #aaa; background: #bdbdbd; }
.group { display: grid; grid-template-columns: 34px 33px; width: 67px; margin: -1px 0 9px; border-top: 1px solid #a9a9a9; }
.group:last-child { margin-bottom: 0; }
.group button { height: 33px; border: 1px solid #a9a9a9; border-width: 0 1px 1px 0; background: #f1f1f1; }
.group button.active { background: #a3a3a3; }
.group svg { width: 20px; height: 20px; overflow: visible; }

.tray {
  position: absolute;
  right: 16px;
  top: 17px;
  width: 369px;
  border: 1px solid #c2c2c2;
  background: #e8e8e8;
  box-shadow: 0 6px 18px #0005;
  color: #111;
}
h2 { height: 17px; line-height: 17px; text-align: center; font-size: 10px; font-weight: 500; }
.entity p { height: 42px; padding: 18px 7px 0; line-height: 18px; font-size: 11px; border-bottom: 1px solid #cdcdcd; }
.blank { display: flex; align-items: flex-end; justify-content: flex-end; height: 202px; }
.resize { width: 9px; height: 9px; margin-left: auto; }
.tags { border-top: 1px solid #c2c2c2; }
.tag-tools { display: flex; align-items: center; height: 31px; padding: 0 13px; gap: 9px; }
.tag-tools button:first-child { margin-right: -2px; }
.filter {
  display: flex;
  align-items: center;
  flex: 1;
  gap: 7px;
  height: 20px;
  padding-left: 6px;
  border-radius: 4px;
  background: #fff;
  box-shadow: 0 1px 1px #0003;
}
input { min-width: 0; padding: 0; border: 0; outline: 0; background: #fff; font: inherit; }
.filter input { flex: 1; font-size: 12px; background: none; }
.filter input::placeholder { color: #bcbcbc; opacity: 1; }
.list {
  height: 325px;
  margin: 0 8px;
  border: 1px solid #d2d2d2;
  background: repeating-linear-gradient(#fff 0 17px, #f4f4f4 17px 34px) 0 27px;
}
table { width: 100%; border-collapse: separate; border-spacing: 0; table-layout: fixed; }
.c-eye { width: 36px; }
.c-color { width: 28px; }
.c-dash { width: 104px; }
.c-edit { width: 28px; }
th { position: relative; height: 27px; padding: 0; background: #fff; border-bottom: 1px solid #e2e2e2; font-size: 11px; font-weight: 400; text-align: left; }
th:not(:last-child)::after { content: ""; position: absolute; right: 0; top: 8px; width: 1px; height: 12px; background: #dcdcdc; }
.h-name div { display: flex; align-items: center; justify-content: space-between; padding: 0 9px 0 19px; }
.h-dash { padding-left: 7px; }
td { height: 17px; padding: 0; line-height: 17px; font-size: 13px; color: #0d0d0d; white-space: nowrap; }
.eye button { margin-left: 13px; height: 17px; }
.name { padding-left: 17px; }
.name.indent { padding-left: 30px; }
.name.folder { padding-left: 4px; }
.folder svg { display: inline-block; margin: 0 5px 2px 0; }
.off .name { color: #bdbdbd; }
.selected { background: #d5d5d5; }
.selected .name { color: #cacaca; }
.dash { padding-left: 4px; }
.edit svg { margin-left: 6px; }
.folded { border-top: 1px solid #c6c6c6; line-height: 16px; }
.dark { background: #dcdcdc; }

.status { display: flex; align-items: center; height: 29px; padding: 0 7px 0 5px; gap: 7px; background: #e8e8e8; color: #2b2b2b; }
.help { width: 18px; height: 18px; border-radius: 50%; border: 1px solid #0a1226; background: #1c3468; color: #0b1020; font: 700 12px Inter, sans-serif; }
.status label { margin-left: auto; }
.status input { width: 190px; height: 19px; margin-left: -4px; border: 1px solid #e0e0e0; }
</style>
